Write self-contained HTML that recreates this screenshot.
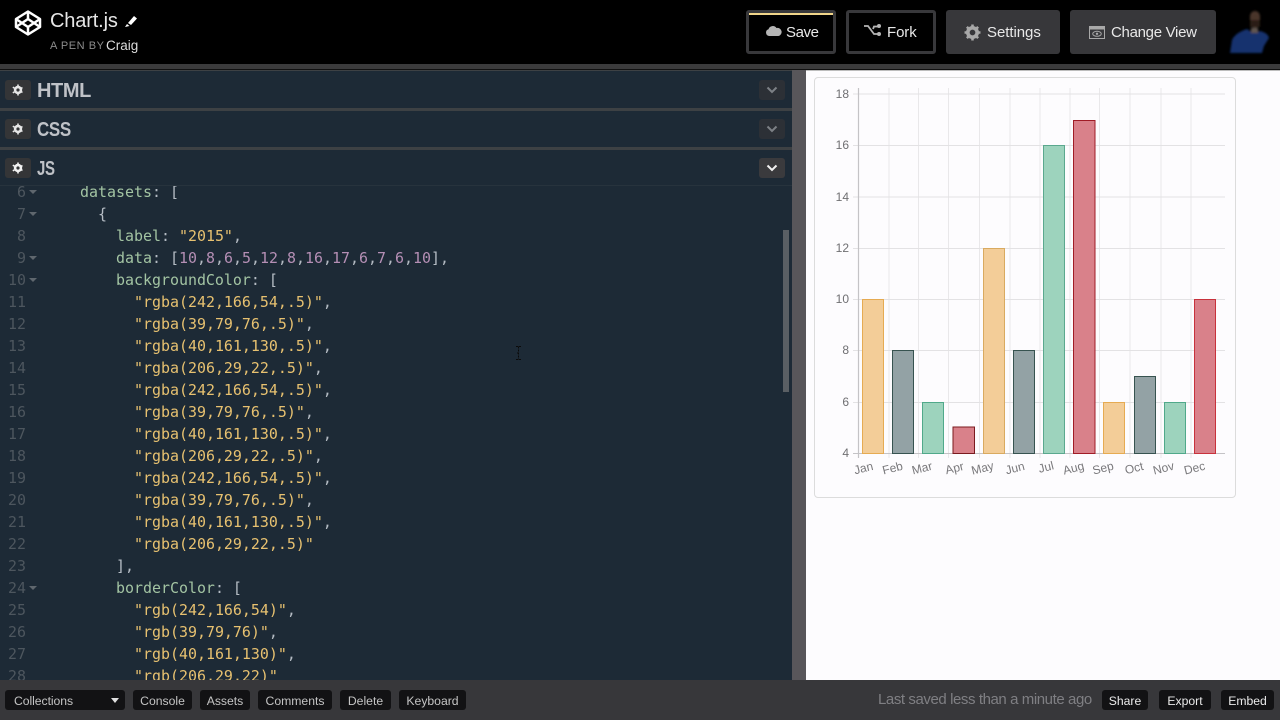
<!DOCTYPE html>
<html><head><meta charset="utf-8"><title>Chart.js</title>
<style>
html,body{margin:0;padding:0;width:1280px;height:720px;overflow:hidden;background:#000;font-family:"Liberation Sans",sans-serif}
.a{position:absolute}
#top{left:0;top:0;width:1280px;height:64px;background:#000}
.tb{position:absolute;top:10px;height:44px;box-sizing:border-box;border-radius:3px;color:#e8e8e8;font-size:15px;line-height:46px;white-space:nowrap}
.dark{border:3px solid #38383b;background:#000;line-height:40px}
.gray{background:#37373a}
.tb span{position:absolute;top:0}
.tb svg{position:absolute}
.sep{position:absolute;left:0;width:792px;height:3px;background:#3d4144}
.gear{position:absolute;left:5px;width:26px;height:20px;background:#343537;border-radius:3px}
.pt{position:absolute;left:37px;font-weight:bold;font-size:20px;color:#bfc2c7;line-height:24px;letter-spacing:-.4px;transform-origin:left center}
.ch{position:absolute;left:759px;width:26px;height:20px;background:#2c3036;border-radius:3px}
#code{left:0;top:186px;width:792px;height:494px;background:#1d2a36;overflow:hidden;font-family:"DejaVu Sans Mono",monospace;font-size:14.95px}
#in{position:absolute;left:0;top:0;width:792px;height:494px}
.l{position:absolute;left:0;height:22px;line-height:22px;white-space:pre;color:#b5bcc4}
.n{position:absolute;left:0;width:26px;text-align:right;height:22px;line-height:22px;color:#4d565e}
.f{position:absolute;left:29px;width:0;height:0;border-left:4px solid transparent;border-right:4px solid transparent;border-top:4px solid #5f676e}
.k{color:#a3c4a3}.s{color:#e7c170}.d{color:#b58fb5}
#foot{left:0;top:680px;width:1280px;height:40px;background:#37373a}
.fb{position:absolute;top:10px;height:20px;background:#121214;border-radius:3px;color:#c4c4c4;font-size:12.2px;line-height:22px;text-align:center}
</style></head><body>

<div class="a" id="top"></div>
<svg class="a" style="left:14px;top:9px" width="28" height="28" viewBox="0 0 28 28" fill="none" stroke="#fff" stroke-width="2.5" stroke-linejoin="round"><path d="M14 2.5 L26 10 V18 L14 25.5 L2 18 V10 Z"/><path d="M2 10 L14 18 L26 10 M2 18 L14 10 L26 18 M14 2.5 V10 M14 18 V25.5"/></svg>
<div class="a" style="left:50px;top:9px;font-size:20px;line-height:24px;color:#e6e6e6;letter-spacing:-.15px">Chart.js</div>
<svg class="a" style="left:123px;top:14px" width="15" height="14" viewBox="0 0 15 14"><path d="M5 9 L11 2 L14 4.5 L8 11 Z" fill="#fff"/><path d="M2 13 L4 10 L6.5 12 Z" fill="#fff"/></svg>
<div class="a" style="left:50px;top:39px;font-size:11px;line-height:14px;color:#8d8d8d;letter-spacing:.55px">A PEN BY</div>
<div class="a" style="left:106px;top:37px;font-size:13.5px;line-height:17px;color:#dcdcdc">Craig</div>

<div class="tb dark" style="left:746px;width:90px"><div class="a" style="left:0;top:0;width:84px;height:2px;background:#f0d48a"></div><svg style="left:16px;top:11px" width="17" height="13" viewBox="0 0 17 13"><path d="M4 12 A3.5 3.5 0 0 1 3.5 5.2 A4.5 4.5 0 0 1 11.5 4 A4 4 0 0 1 13.5 12 Z" fill="#b5b5b5"/></svg><span style="left:37px;letter-spacing:-.4px">Save</span></div>
<div class="tb dark" style="left:846px;width:90px"><svg style="left:15px;top:10px" width="18" height="15" viewBox="0 0 18 15" fill="none" stroke="#b5b5b5" stroke-width="1.8"><path d="M0 3 H4 L10 11 H14 M9 6 L10 3.5 H14"/><circle cx="15" cy="3" r="2" fill="#b5b5b5" stroke="none"/><circle cx="15" cy="11" r="2" fill="#b5b5b5" stroke="none"/></svg><span style="left:38px;letter-spacing:-.1px">Fork</span></div>
<div class="tb gray" style="left:946px;width:114px"><svg style="left:18px;top:14px" width="17" height="17" viewBox="0 0 16 16"><circle cx="8" cy="8" r="4.4" fill="none" stroke="#a8a8a8" stroke-width="3.4"/><path d="M8 8 V0.5 M8 8 V15.5 M8 8 H0.5 M8 8 H15.5 M8 8 L2.7 2.7 M8 8 L13.3 13.3 M8 8 L2.7 13.3 M8 8 L13.3 2.7" stroke="#a8a8a8" stroke-width="2.4" stroke-dasharray="0 5 8"/></svg><span style="left:41px;letter-spacing:-.05px">Settings</span></div>
<div class="tb gray" style="left:1070px;width:146px"><svg style="left:19px;top:16px" width="16" height="13" viewBox="0 0 16 13" fill="none" stroke="#a8a8a8"><rect x=".5" y=".5" width="15" height="12"/><rect x=".5" y=".5" width="15" height="2.5" fill="#a8a8a8"/><ellipse cx="8" cy="7.8" rx="4.3" ry="2.5"/><circle cx="8" cy="7.8" r="1.2" fill="#a8a8a8" stroke="none"/></svg><span style="left:41px;letter-spacing:-.3px">Change View</span></div>

<svg class="a" style="left:1222px;top:6px" width="58" height="50" viewBox="0 0 58 50">
<defs><filter id="bl"><feGaussianBlur stdDeviation="1"/></filter></defs>
<g filter="url(#bl)"><path d="M8 47 L10 34 Q13 27 25 23 L31 27 L38 25 Q46 27 47 32 L42 40 L40 47 Z" fill="#14306e"/><rect x="28" y="5" width="10" height="17" rx="5" fill="#4a3529"/><path d="M28 14 h10 v7 h-10z" fill="#2c1e17"/><rect x="29" y="22" width="7" height="5" fill="#5e544f"/></g></svg>

<div class="a" style="left:0;top:64px;width:1280px;height:5px;background:#3b3b3c"></div>
<div class="a" style="left:0;top:69px;width:1280px;height:1px;background:#111"></div>

<div class="a" style="left:0;top:70px;width:792px;height:610px;background:#1d2a36"></div>
<div class="a" style="left:792px;top:70px;width:14px;height:610px;background:#58565a"></div>

<div class="sep" style="top:70px;height:1px;background:#3d4144"></div>
<div class="sep" style="top:108px"></div>
<div class="sep" style="top:147px"></div>
<div class="a" style="left:0;top:185px;width:792px;height:1px;background:#27333d"></div>

<div class="gear" style="top:80px"></div><div class="pt" style="top:79px">HTML</div>
<div class="gear" style="top:119px"></div><div class="pt" style="top:118px;transform:scaleX(.85)">CSS</div>
<div class="gear" style="top:158px"></div><div class="pt" style="top:157px;transform:scaleX(.75)">JS</div>
<svg class="a" style="left:12px;top:84px" width="12" height="12" viewBox="0 0 12 12"><circle cx="6" cy="6" r="2.9" fill="none" stroke="#e6e6e6" stroke-width="2.6"/><path d="M6 .5V11.5M.8 3.2L11.2 8.8M.8 8.8L11.2 3.2" stroke="#e6e6e6" stroke-width="1.6" stroke-dasharray="1.8 7.4"/></svg>
<svg class="a" style="left:12px;top:123px" width="12" height="12" viewBox="0 0 12 12"><circle cx="6" cy="6" r="2.9" fill="none" stroke="#e6e6e6" stroke-width="2.6"/><path d="M6 .5V11.5M.8 3.2L11.2 8.8M.8 8.8L11.2 3.2" stroke="#e6e6e6" stroke-width="1.6" stroke-dasharray="1.8 7.4"/></svg>
<svg class="a" style="left:12px;top:162px" width="12" height="12" viewBox="0 0 12 12"><circle cx="6" cy="6" r="2.9" fill="none" stroke="#f2f2f2" stroke-width="2.6"/><path d="M6 .5V11.5M.8 3.2L11.2 8.8M.8 8.8L11.2 3.2" stroke="#f2f2f2" stroke-width="1.6" stroke-dasharray="1.8 7.4"/></svg>

<div class="ch" style="top:80px"><svg class="a" style="left:7px;top:6px" width="12" height="8" viewBox="0 0 12 8"><path d="M1.5 1.5 L6 6 L10.5 1.5" fill="none" stroke="#7d8186" stroke-width="2"/></svg></div>
<div class="ch" style="top:119px"><svg class="a" style="left:7px;top:6px" width="12" height="8" viewBox="0 0 12 8"><path d="M1.5 1.5 L6 6 L10.5 1.5" fill="none" stroke="#7d8186" stroke-width="2"/></svg></div>
<div class="ch" style="top:158px;background:#3a3a3d"><svg class="a" style="left:7px;top:6px" width="12" height="8" viewBox="0 0 12 8"><path d="M1.5 1.5 L6 6 L10.5 1.5" fill="none" stroke="#f0f0f0" stroke-width="2"/></svg></div>

<div class="a" id="code"><div id="in">
<div class="n" style="top:-5px">6</div><div class="f" style="top:4px"></div><div class="l" style="left:80px;top:-5px"><span class="k">datasets</span>: [</div>
<div class="n" style="top:17px">7</div><div class="f" style="top:26px"></div><div class="l" style="left:98px;top:17px">{</div>
<div class="n" style="top:39px">8</div><div class="l" style="left:116px;top:39px"><span class="k">label</span>: <span class="s">"2015"</span>,</div>
<div class="n" style="top:61px">9</div><div class="f" style="top:70px"></div><div class="l" style="left:116px;top:61px"><span class="k">data</span>: [<span class="d">10</span>,<span class="d">8</span>,<span class="d">6</span>,<span class="d">5</span>,<span class="d">12</span>,<span class="d">8</span>,<span class="d">16</span>,<span class="d">17</span>,<span class="d">6</span>,<span class="d">7</span>,<span class="d">6</span>,<span class="d">10</span>],</div>
<div class="n" style="top:83px">10</div><div class="f" style="top:92px"></div><div class="l" style="left:116px;top:83px"><span class="k">backgroundColor</span>: [</div>
<div class="n" style="top:105px">11</div><div class="l" style="left:134px;top:105px"><span class="s">"rgba(242,166,54,.5)"</span>,</div>
<div class="n" style="top:127px">12</div><div class="l" style="left:134px;top:127px"><span class="s">"rgba(39,79,76,.5)"</span>,</div>
<div class="n" style="top:149px">13</div><div class="l" style="left:134px;top:149px"><span class="s">"rgba(40,161,130,.5)"</span>,</div>
<div class="n" style="top:171px">14</div><div class="l" style="left:134px;top:171px"><span class="s">"rgba(206,29,22,.5)"</span>,</div>
<div class="n" style="top:193px">15</div><div class="l" style="left:134px;top:193px"><span class="s">"rgba(242,166,54,.5)"</span>,</div>
<div class="n" style="top:215px">16</div><div class="l" style="left:134px;top:215px"><span class="s">"rgba(39,79,76,.5)"</span>,</div>
<div class="n" style="top:237px">17</div><div class="l" style="left:134px;top:237px"><span class="s">"rgba(40,161,130,.5)"</span>,</div>
<div class="n" style="top:259px">18</div><div class="l" style="left:134px;top:259px"><span class="s">"rgba(206,29,22,.5)"</span>,</div>
<div class="n" style="top:281px">19</div><div class="l" style="left:134px;top:281px"><span class="s">"rgba(242,166,54,.5)"</span>,</div>
<div class="n" style="top:303px">20</div><div class="l" style="left:134px;top:303px"><span class="s">"rgba(39,79,76,.5)"</span>,</div>
<div class="n" style="top:325px">21</div><div class="l" style="left:134px;top:325px"><span class="s">"rgba(40,161,130,.5)"</span>,</div>
<div class="n" style="top:347px">22</div><div class="l" style="left:134px;top:347px"><span class="s">"rgba(206,29,22,.5)"</span></div>
<div class="n" style="top:369px">23</div><div class="l" style="left:116px;top:369px">],</div>
<div class="n" style="top:391px">24</div><div class="f" style="top:400px"></div><div class="l" style="left:116px;top:391px"><span class="k">borderColor</span>: [</div>
<div class="n" style="top:413px">25</div><div class="l" style="left:134px;top:413px"><span class="s">"rgb(242,166,54)"</span>,</div>
<div class="n" style="top:435px">26</div><div class="l" style="left:134px;top:435px"><span class="s">"rgb(39,79,76)"</span>,</div>
<div class="n" style="top:457px">27</div><div class="l" style="left:134px;top:457px"><span class="s">"rgb(40,161,130)"</span>,</div>
<div class="n" style="top:479px">28</div><div class="l" style="left:134px;top:479px"><span class="s">"rgb(206,29,22)"</span></div>
</div></div>
<div class="a" style="left:783px;top:230px;width:6px;height:162px;background:#5a5f64"></div>
<svg class="a" style="left:515px;top:346px" width="7" height="14" viewBox="0 0 7 14"><path d="M1 .5H6M3.5 .5V13.5M1 13.5H6M2 7H5" stroke="#0b0b0b" stroke-width="1" fill="none" stroke-dasharray="2 1"/></svg>

<div class="a" style="left:806px;top:70px;width:474px;height:610px;background:#fdfcfe"></div>
<div class="a" style="left:806px;top:70px;width:474px;height:1px;background:#bdbdbd"></div>
<div class="a" style="left:814px;top:77px;width:422px;height:421px;box-sizing:border-box;border:1px solid #dcdcdc;border-radius:4px;background:#fdfcfe"></div>

<svg class="a" style="left:806px;top:70px" width="474" height="440" viewBox="806 70 474 440">
<g stroke="#e9e8ea" stroke-width="1"><path d="M889 88V458M918.5 88V458M948.5 88V458M979.5 88V458M1010 88V458M1040 88V458M1070 88V458M1099.5 88V458M1130 88V458M1161 88V458M1191 88V458"/></g>
<g stroke="#e3e2e4" stroke-width="1"><path d="M853 94H1225M853 145.5H1225M853 197H1225M853 248.5H1225M853 299.5H1225M853 350.5H1225M853 402.5H1225"/></g>
<path d="M853 453.5H1225" stroke="#c4c3c6"/>
<path d="M858.5 88V458" stroke="#c4c3c6" stroke-width="1.2"/>
<g stroke-width="1">
<rect x="862.5" y="299.5" width="21" height="154" fill="#f3cd98" stroke="#e6ab52"/>
<rect x="892.5" y="350.5" width="21" height="103" fill="#93a2a5" stroke="#375350"/>
<rect x="922.5" y="402.5" width="21" height="51" fill="#9dd3bd" stroke="#50a98a"/>
<rect x="953" y="427" width="21.5" height="26.5" fill="#d9818a" stroke="#7a1a1f"/>
<rect x="983.5" y="248.5" width="21" height="205" fill="#f3cd98" stroke="#d9aa60"/>
<rect x="1013.5" y="350.5" width="21" height="103" fill="#93a2a5" stroke="#375350"/>
<rect x="1043.5" y="145.5" width="21" height="308" fill="#9dd3bd" stroke="#5aa88e"/>
<rect x="1073.5" y="120.5" width="21.5" height="333" fill="#d9818a" stroke="#a01c26"/>
<rect x="1103.5" y="402.5" width="21" height="51" fill="#f3cd98" stroke="#e6ab52"/>
<rect x="1134.5" y="376.5" width="21" height="77" fill="#93a2a5" stroke="#375350"/>
<rect x="1164.5" y="402.5" width="21" height="51" fill="#9dd3bd" stroke="#50a98a"/>
<rect x="1194.5" y="299.5" width="21" height="154" fill="#d9818a" stroke="#c8323c"/>
</g>
<g font-family="'Liberation Sans',sans-serif" font-size="12" fill="#6f6f72" text-anchor="end">
<text x="849" y="98">18</text><text x="849" y="149">16</text><text x="849" y="201">14</text><text x="849" y="252">12</text><text x="849" y="303">10</text><text x="849" y="354">8</text><text x="849" y="406">6</text><text x="849" y="457">4</text>
<g fill="#7a797c" text-anchor="middle">
<text transform="translate(864.5,472) rotate(-14)">Jan</text>
<text transform="translate(893.5,472) rotate(-14)">Feb</text>
<text transform="translate(923,472) rotate(-14)">Mar</text>
<text transform="translate(955.5,472) rotate(-14)">Apr</text>
<text transform="translate(983.5,472) rotate(-14)">May</text>
<text transform="translate(1016,472) rotate(-14)">Jun</text>
<text transform="translate(1047,471) rotate(-14)">Jul</text>
<text transform="translate(1074.5,472) rotate(-14)">Aug</text>
<text transform="translate(1104,472) rotate(-14)">Sep</text>
<text transform="translate(1135,472) rotate(-14)">Oct</text>
<text transform="translate(1164.5,472) rotate(-14)">Nov</text>
<text transform="translate(1195.5,472) rotate(-14)">Dec</text>
</g></g>
</svg>

<div class="a" id="foot">
<div class="fb" style="left:5px;width:120px;text-align:left"><span style="position:absolute;left:9px;letter-spacing:-.05px">Collections</span><span style="position:absolute;left:106px;top:8px;width:0;height:0;border-left:4px solid transparent;border-right:4px solid transparent;border-top:5px solid #e0e0e0"></span></div>
<div class="fb" style="left:133px;width:59px">Console</div>
<div class="fb" style="left:200px;width:50px">Assets</div>
<div class="fb" style="left:258px;width:74px">Comments</div>
<div class="fb" style="left:340px;width:51px">Delete</div>
<div class="fb" style="left:399px;width:67px">Keyboard</div>
<div class="a" style="left:878px;top:10px;font-size:15px;line-height:20px;color:#7f7f83;letter-spacing:-.42px;white-space:nowrap">Last saved less than a minute ago</div>
<div class="fb" style="left:1102px;width:46px;color:#eaeaea">Share</div>
<div class="fb" style="left:1159px;width:52px;color:#eaeaea">Export</div>
<div class="fb" style="left:1221px;width:53px;color:#eaeaea">Embed</div>
</div>
</body></html>
